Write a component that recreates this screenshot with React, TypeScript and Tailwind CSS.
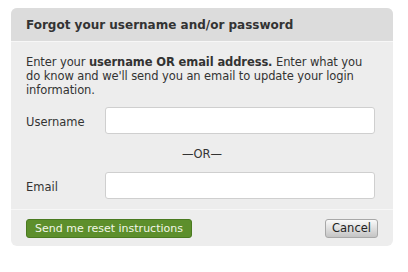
import React from 'react';

const font = { fontFamily: '"DejaVu Sans", Verdana, sans-serif' };

export default function App() {
  return (
    <div className="w-[408px] h-[272px] bg-white pt-[8px] pl-[11px]" style={font}>
      <div className="w-[382px] rounded-[6px] overflow-hidden bg-[#ededed] text-[#333]">
        {/* Header */}
        <div className="h-[34px] bg-[#dcdcdc] border-b border-[#f7f7f7] flex items-center px-[15px]">
          <h2 className="text-[12px] font-bold text-[#333]">Forgot your username and/or password</h2>
        </div>

        {/* Body */}
        <div className="px-[15px] pt-[13px] pb-[10px] border-b border-[#f7f7f7]">
          <p className="text-[11.5px] leading-[14px] tracking-[-0.1px]">
            Enter your <b>username OR email address.</b> Enter what you do know and we'll send you an email to update your login information.
          </p>

          <div className="flex items-center mt-[10px]">
            <label className="w-[79px] pt-[5px] text-[11.5px]">Username</label>
            <input className="w-[270px] h-[27px] bg-white border border-[#cfcfcf] rounded-[3px] outline-none" />
          </div>

          <div className="h-[38px] flex items-center justify-center pt-[4px] text-[11.5px] text-[#333]">—OR—</div>

          <div className="flex items-center">
            <label className="w-[79px] pt-[5px] text-[11.5px]">Email</label>
            <input className="w-[270px] h-[27px] bg-white border border-[#cfcfcf] rounded-[3px] outline-none" />
          </div>
        </div>

        {/* Footer */}
        <div className="h-[36px] px-[15px] flex items-start justify-between pt-[9px]">
          <button className="h-[19px] px-[8px] rounded-[3px] bg-[#5d8f2c] border border-[#4a7a20] text-[11px] text-[#f2f7e8] leading-none">
            Send me reset instructions
          </button>
          <button className="h-[19px] px-[6px] rounded-[3px] bg-gradient-to-b from-[#fafafa] to-[#c4c4c4] border border-[#a8a8a8] text-[11.5px] text-[#222] leading-none">
            Cancel
          </button>
        </div>
      </div>
    </div>
  );
}
